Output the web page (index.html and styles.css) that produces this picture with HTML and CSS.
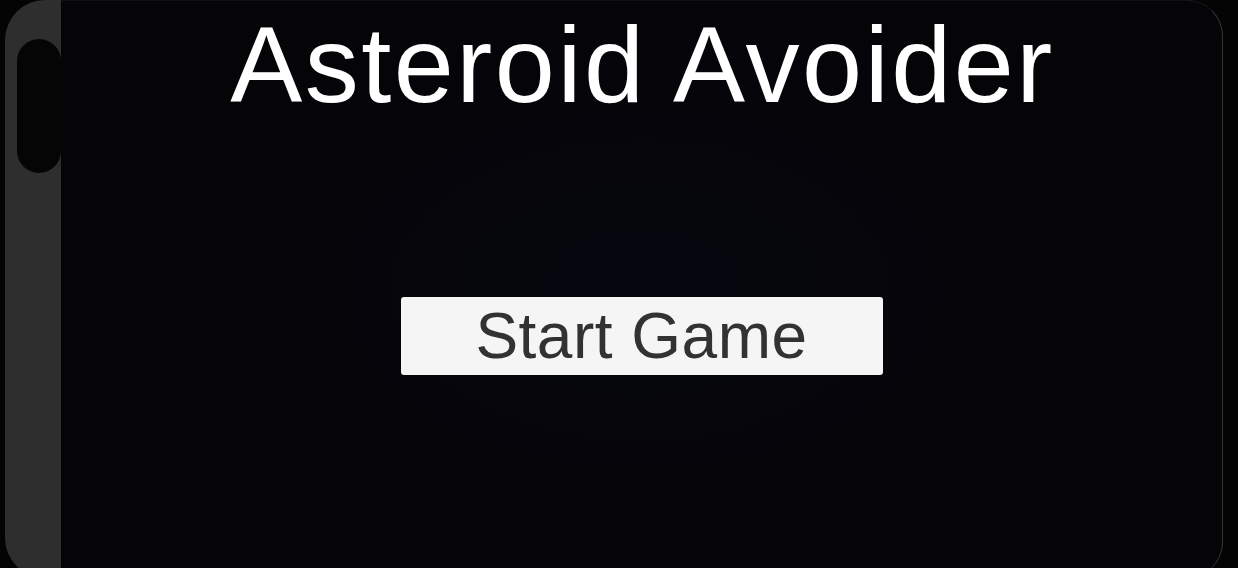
FILE: index.html
```html
<!DOCTYPE html>
<html lang="en">
<head>
<meta charset="utf-8">
<title>Asteroid Avoider</title>
<link rel="stylesheet" href="styles.css">
</head>
<body>
  <div class="device">
    <div class="bezel">
      <div class="notch"></div>
    </div>
    <main class="screen">
      <h1 class="title">Asteroid Avoider</h1>
      <button class="start-button" type="button">Start Game</button>
    </main>
  </div>
</body>
</html>
```

FILE: styles.css
```css
html, body {
  margin: 0;
  padding: 0;
}

body {
  background: #040404;
  height: 568px;
  overflow: hidden;
  font-family: "Liberation Sans", Arial, sans-serif;
}

/* phone body in landscape: bezel on the left, screen filling the rest */
.device {
  display: flex;
  margin-left: 5px;
  width: 1218px;
  height: 578px;
  background: #2e2e2e;
  border-radius: 40px 36px 36px 40px;
  overflow: hidden;
}

.bezel {
  width: 56px;
  flex: none;
  display: flex;
  justify-content: flex-end;
  align-items: flex-start;
  padding-top: 39px;
  box-sizing: border-box;
}

.notch {
  width: 44px;
  height: 134px;
  background: #050505;
  border-radius: 22px;
}

.screen {
  flex: 1;
  display: flex;
  flex-direction: column;
  align-items: center;
  background: radial-gradient(ellipse 45% 55% at 50% 50%, #06060f 0%, #05050a 60%, #050508 100%);
  border-top: 1px solid #101012;
  border-right: 1px solid #333333;
  border-radius: 0 36px 36px 0;
}

.title {
  margin: 10px 0 0 2px;
  font-weight: normal;
  font-size: 108px;
  line-height: 108px;
  letter-spacing: 2.5px;
  color: #ffffff;
  white-space: nowrap;
}

.start-button {
  margin-top: 178px;
  width: 482px;
  height: 78px;
  padding: 0;
  border: none;
  border-radius: 3px;
  background: #f5f5f5;
  color: #323232;
  font-family: "Liberation Sans", Arial, sans-serif;
  font-size: 64px;
  letter-spacing: 0.5px;
  line-height: 78px;
  cursor: pointer;
}
```
